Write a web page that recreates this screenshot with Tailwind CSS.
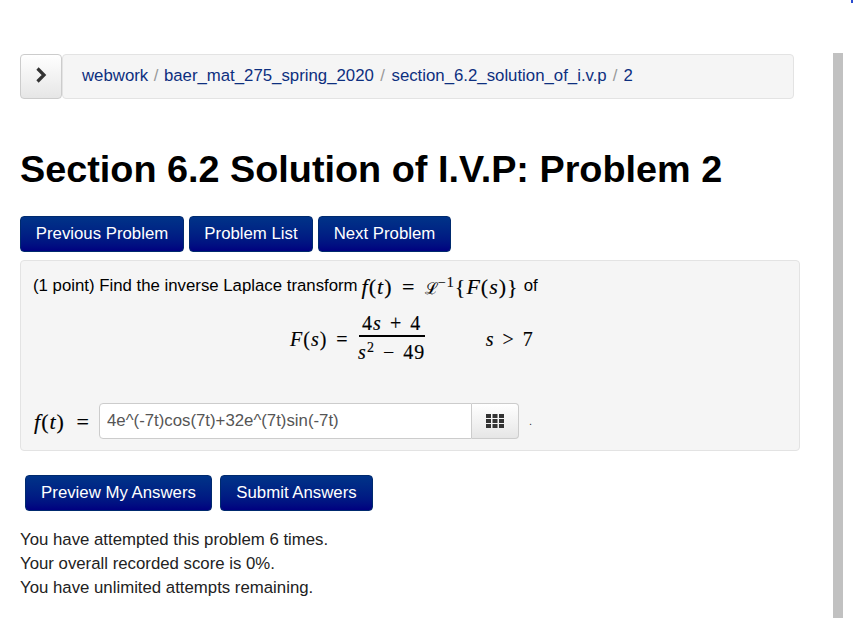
<!DOCTYPE html>
<html>
<head>
<meta charset="utf-8">
<script src="https://cdn.jsdelivr.net/npm/@tailwindcss/browser@4"></script>
</head>
<body class="bg-white">
<div class="relative h-[618px] w-[853px] overflow-hidden pl-5 pt-[54px] font-['Liberation_Sans',Arial,sans-serif] text-[#000]">
  <div class="absolute right-[10px] top-[53px] bottom-0 w-[10px] bg-[#c1c1c1]"></div>
  <div class="absolute right-0 top-0 h-[3px] w-[2px] bg-[#2a4bd0]"></div>

  <div class="flex h-[45px] w-[774px]">
    <button class="flex h-[45px] w-[42px] items-center justify-center rounded-[4px] border border-[#ccc] bg-gradient-to-b from-white to-[#e6e6e6] pb-[3px]">
      <svg width="12" height="16" viewBox="0 0 12 16"><path d="M2.5 1.5 L9 8 L2.5 14.5" fill="none" stroke="#333" stroke-width="3.2"/></svg>
    </button>
    <nav class="flex h-[45px] flex-1 items-center rounded-[4px] border border-[#e3e3e3] bg-[#f5f5f5] pb-[2px] pl-[19px] text-[16.8px]">
      <a class="text-[#0d2f7f]">webwork</a><span class="px-[5.5px] text-[#999]">/</span>
      <a class="text-[#0d2f7f]">baer_mat_275_spring_2020</a><span class="px-[6.5px] text-[#999]">/</span>
      <a class="text-[#0d2f7f]">section_6.2_solution_of_i.v.p</a><span class="px-[6px] text-[#999]">/</span>
      <a class="text-[#0d2f7f]">2</a>
    </nav>
  </div>

  <h1 class="mt-[48px] text-[37.8px] leading-[44px] font-bold">Section 6.2 Solution of I.V.P: Problem 2</h1>

  <div class="mt-[25px] flex gap-[5px]">
    <button class="h-9 w-[164px] rounded-[4px] border border-[#002a6e] bg-gradient-to-b from-[#003388] to-[#000080] text-[16.8px] text-white">Previous Problem</button>
    <button class="h-9 w-[124px] rounded-[4px] border border-[#002a6e] bg-gradient-to-b from-[#003388] to-[#000080] text-[16.8px] text-white">Problem List</button>
    <button class="h-9 w-[133px] rounded-[4px] border border-[#002a6e] bg-gradient-to-b from-[#003388] to-[#000080] text-[16.8px] text-white">Next Problem</button>
  </div>

  <div class="mt-2 h-[191px] w-[780px] rounded-[4px] border border-[#e3e3e3] bg-[#f5f5f5] pl-3 pt-[11px]">
    <p class="flex h-[28px] items-center text-[16.8px] whitespace-nowrap">
      <span>(1 point) Find the inverse Laplace transform</span>
      <span class="ml-[4px] font-['Liberation_Serif',serif] text-[22px] tracking-[1px] [word-spacing:3px] [-webkit-text-stroke:0.15px_black]"><i>f</i>(<i>t</i>) = <span class="text-[16px] tracking-normal">ℒ</span><sup class="text-[14px]">−1</sup>{<i>F</i>(<i>s</i>)}</span>
      <span class="ml-[5px]">of</span>
    </p>
    <div class="mt-[12px] flex h-[52px] items-center pl-[257px] font-['Liberation_Serif',serif] text-[20px] tracking-[1px] [-webkit-text-stroke:0.15px_black]">
      <span class="pt-[1px] whitespace-nowrap [word-spacing:3px]"><i>F</i>(<i>s</i>) =</span>
      <span class="ml-[10px] flex w-[66px] flex-col items-center">
        <span class="h-[26px] w-full border-b-2 border-black text-center leading-[24px] whitespace-nowrap [word-spacing:2px]">4<i>s</i> + 4</span>
        <span class="mt-[2px] leading-[26px] whitespace-nowrap [word-spacing:2px]"><i>s</i><sup class="text-[14px]">2</sup> − 49</span>
      </span>
      <span class="ml-[61px] pt-[1px] whitespace-nowrap [word-spacing:2px]"><i>s</i> &gt; 7</span>
    </div>
    <div class="mt-[39px] flex h-9 items-center">
      <span class="w-[66px] pl-[1px] font-['Liberation_Serif',serif] text-[22px] tracking-[1px] [word-spacing:5px] whitespace-nowrap [-webkit-text-stroke:0.15px_black]"><i>f</i>(<i>t</i>) =</span>
      <div class="flex h-9 w-[421px]">
        <input class="h-9 w-[373px] rounded-l-[4px] border border-[#ccc] bg-white pl-[7px] text-[16.8px] text-[#555]" value="4e^(-7t)cos(7t)+32e^(7t)sin(-7t)">
        <button class="flex h-9 w-[47px] items-center justify-center rounded-r-[4px] border border-l-0 border-[#ccc] bg-gradient-to-b from-white to-[#e6e6e6]">
          <svg width="18" height="14" viewBox="0 0 18 14" fill="#333"><rect x="0" y="0" width="5" height="4"/><rect x="6.5" y="0" width="5" height="4"/><rect x="13" y="0" width="5" height="4"/><rect x="0" y="5" width="5" height="4"/><rect x="6.5" y="5" width="5" height="4"/><rect x="13" y="5" width="5" height="4"/><rect x="0" y="10" width="5" height="4"/><rect x="6.5" y="10" width="5" height="4"/><rect x="13" y="10" width="5" height="4"/></svg>
        </button>
      </div>
      <span class="ml-[9px] text-[11px] text-[#333]">.</span>
    </div>
  </div>

  <div class="mt-6 flex gap-2 pl-[5px]">
    <button class="h-9 w-[187px] rounded-[4px] border border-[#002a6e] bg-gradient-to-b from-[#003388] to-[#000080] text-[16.8px] text-white">Preview My Answers</button>
    <button class="h-9 w-[153px] rounded-[4px] border border-[#002a6e] bg-gradient-to-b from-[#003388] to-[#000080] text-[16.8px] text-white">Submit Answers</button>
  </div>

  <div class="mt-[17px] text-[16.8px] leading-6 text-[#222]">
    <p>You have attempted this problem 6 times.</p>
    <p>Your overall recorded score is 0%.</p>
    <p>You have unlimited attempts remaining.</p>
  </div>
</div>
</body>
</html>
